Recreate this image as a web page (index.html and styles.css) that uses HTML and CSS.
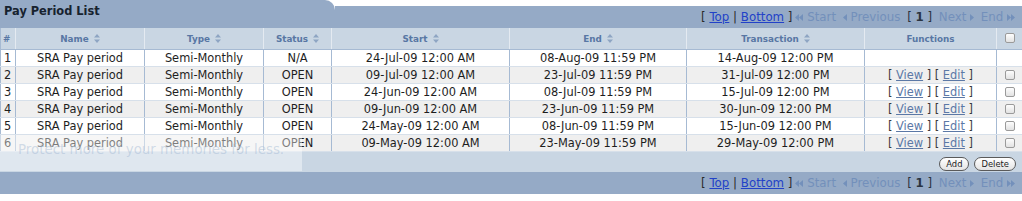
FILE: index.html
```html
<!DOCTYPE html>
<html lang="en">
<head>
    <meta charset="UTF-8">
    <title>Pay Period List</title>
    <link rel="stylesheet" href="styles.css">
</head>
<body>
    <div class="panel">
        <div class="panel-head">
            <div class="tab">Pay Period List</div>
            <div class="head-bar">
                <div class="pager">
                    <span class="br">[</span> <a href="#">Top</a> <span class="br">|</span> <a href="#">Bottom</a> <span class="br">]</span><span class="nav"><svg class="arr" width="8" height="7" viewBox="0 0 8 7"><path d="M4 0v7L0 3.5zM8 0v7L4 3.5z"/></svg> Start</span>
                    <span class="nav"><svg class="arr" width="4" height="7" viewBox="0 0 4 7"><path d="M4 0v7L0 3.5z"/></svg> Previous</span>
                    <span class="cur">[ <b>1</b> ]</span>
                    <span class="nav">Next <svg class="arr" width="4" height="7" viewBox="0 0 4 7"><path d="M0 0v7L4 3.5z"/></svg></span>
                    <span class="nav">End <svg class="arr" width="8" height="7" viewBox="0 0 8 7"><path d="M0 0v7L4 3.5zM4 0v7L8 3.5z"/></svg></span>
                </div>
            </div>
        </div>

        <table class="grid">
            <colgroup>
                <col style="width:15px">
                <col style="width:129px">
                <col style="width:119px">
                <col style="width:68px">
                <col style="width:178px">
                <col style="width:177px">
                <col style="width:178px">
                <col style="width:132px">
                <col>
            </colgroup>
            <thead>
                <tr>
                    <th class="num">#</th>
                    <th>Name <svg class="sort" width="6" height="9" viewBox="0 0 6 9"><path d="M3 0l3 3.5H0zM3 9L0 5.5h6z"/></svg></th>
                    <th>Type <svg class="sort" width="6" height="9" viewBox="0 0 6 9"><path d="M3 0l3 3.5H0zM3 9L0 5.5h6z"/></svg></th>
                    <th>Status <svg class="sort" width="6" height="9" viewBox="0 0 6 9"><path d="M3 0l3 3.5H0zM3 9L0 5.5h6z"/></svg></th>
                    <th>Start <svg class="sort" width="6" height="9" viewBox="0 0 6 9"><path d="M3 0l3 3.5H0zM3 9L0 5.5h6z"/></svg></th>
                    <th>End <svg class="sort" width="6" height="9" viewBox="0 0 6 9"><path d="M3 0l3 3.5H0zM3 9L0 5.5h6z"/></svg></th>
                    <th>Transaction <svg class="sort" width="6" height="9" viewBox="0 0 6 9"><path d="M3 0l3 3.5H0zM3 9L0 5.5h6z"/></svg></th>
                    <th>Functions</th>
                    <th><input type="checkbox" class="chk"></th>
                </tr>
            </thead>
            <tbody>
                <tr>
                    <td class="num">1</td>
                    <td>SRA Pay period</td>
                    <td>Semi-Monthly</td>
                    <td>N/A</td>
                    <td>24-Jul-09 12:00 AM</td>
                    <td>08-Aug-09 11:59 PM</td>
                    <td>14-Aug-09 12:00 PM</td>
                    <td></td>
                    <td></td>
                </tr>
                <tr class="alt">
                    <td class="num">2</td>
                    <td>SRA Pay period</td>
                    <td>Semi-Monthly</td>
                    <td>OPEN</td>
                    <td>09-Jul-09 12:00 AM</td>
                    <td>23-Jul-09 11:59 PM</td>
                    <td>31-Jul-09 12:00 PM</td>
                    <td class="fn">[ <a href="#">View</a> ] [ <a href="#">Edit</a> ]</td>
                    <td><input type="checkbox" class="chk"></td>
                </tr>
                <tr>
                    <td class="num">3</td>
                    <td>SRA Pay period</td>
                    <td>Semi-Monthly</td>
                    <td>OPEN</td>
                    <td>24-Jun-09 12:00 AM</td>
                    <td>08-Jul-09 11:59 PM</td>
                    <td>15-Jul-09 12:00 PM</td>
                    <td class="fn">[ <a href="#">View</a> ] [ <a href="#">Edit</a> ]</td>
                    <td><input type="checkbox" class="chk"></td>
                </tr>
                <tr class="alt">
                    <td class="num">4</td>
                    <td>SRA Pay period</td>
                    <td>Semi-Monthly</td>
                    <td>OPEN</td>
                    <td>09-Jun-09 12:00 AM</td>
                    <td>23-Jun-09 11:59 PM</td>
                    <td>30-Jun-09 12:00 PM</td>
                    <td class="fn">[ <a href="#">View</a> ] [ <a href="#">Edit</a> ]</td>
                    <td><input type="checkbox" class="chk"></td>
                </tr>
                <tr>
                    <td class="num">5</td>
                    <td>SRA Pay period</td>
                    <td>Semi-Monthly</td>
                    <td>OPEN</td>
                    <td>24-May-09 12:00 AM</td>
                    <td>08-Jun-09 11:59 PM</td>
                    <td>15-Jun-09 12:00 PM</td>
                    <td class="fn">[ <a href="#">View</a> ] [ <a href="#">Edit</a> ]</td>
                    <td><input type="checkbox" class="chk"></td>
                </tr>
                <tr class="alt">
                    <td class="num">6</td>
                    <td>SRA Pay period</td>
                    <td>Semi-Monthly</td>
                    <td>OPEN</td>
                    <td>09-May-09 12:00 AM</td>
                    <td>23-May-09 11:59 PM</td>
                    <td>29-May-09 12:00 PM</td>
                    <td class="fn">[ <a href="#">View</a> ] [ <a href="#">Edit</a> ]</td>
                    <td><input type="checkbox" class="chk"></td>
                </tr>
            </tbody>
        </table>

        <div class="actions">
            <button class="pill">Add</button>
            <button class="pill">Delete</button>
        </div>

        <div class="foot-bar">
            <div class="pager">
                <span class="br">[</span> <a href="#">Top</a> <span class="br">|</span> <a href="#">Bottom</a> <span class="br">]</span><span class="nav"><svg class="arr" width="8" height="7" viewBox="0 0 8 7"><path d="M4 0v7L0 3.5zM8 0v7L4 3.5z"/></svg> Start</span>
                <span class="nav"><svg class="arr" width="4" height="7" viewBox="0 0 4 7"><path d="M4 0v7L0 3.5z"/></svg> Previous</span>
                <span class="cur">[ <b>1</b> ]</span>
                <span class="nav">Next <svg class="arr" width="4" height="7" viewBox="0 0 4 7"><path d="M0 0v7L4 3.5z"/></svg></span>
                <span class="nav">End <svg class="arr" width="8" height="7" viewBox="0 0 8 7"><path d="M0 0v7L4 3.5zM4 0v7L8 3.5z"/></svg></span>
            </div>
        </div>

        <!-- photo host banner that sits over the lower left corner -->
        <div class="banner">Protect more of your memories for less.</div>
    </div>
</body>
</html>
```

FILE: styles.css
```css
body {
    margin: 0;
    background: #fff;
    font-family: "DejaVu Sans", Verdana, sans-serif;
    font-size: 11.4px;
    color: #1e1e1e;
}

.panel {
    position: relative;
    width: 1022px;
}

/* top bar */
.panel-head {
    display: flex;
    align-items: flex-end;
    height: 28px;
}

.tab {
    width: 335px;
    height: 28px;
    box-sizing: border-box;
    background: #95aac6;
    border-top-right-radius: 10px;
    padding: 4px 0 0 4px;
    font-weight: bold;
    color: #17222f;
}

.head-bar {
    flex: 1;
    height: 22px;
    background: #95aac6;
    display: flex;
    align-items: center;
    justify-content: flex-end;
    padding-right: 7px;
}

.pager {
    white-space: nowrap;
    color: #2c2c2c;
    font-size: 11.8px;
}

.pager a {
    color: #2241c8;
    text-decoration: underline;
}

.pager .nav {
    color: #7390bb;
    margin-left: 3px;
}

.pager .cur {
    margin-left: 3px;
    color: #2a3340;
}

.arr {
    fill: #7390bb;
    vertical-align: 0;
}

/* table */
.grid {
    width: 1022px;
    table-layout: fixed;
    border-collapse: collapse;
    border-left: 1px solid #a6bad3;
}

.grid th {
    height: 21px;
    padding: 0;
    background: #c9d6e3;
    color: #5877a4;
    font-size: 8.8px;
    font-weight: bold;
    text-align: center;
    border-left: 1px solid #e4eaf1;
    border-bottom: 1px solid #a6bad3;
    white-space: nowrap;
}

.grid th:first-child {
    border-left: none;
}

.sort {
    fill: #8ea5c3;
    vertical-align: -1px;
    margin-left: 2px;
}

.grid td {
    height: 16px;
    padding: 0;
    line-height: 16px;
    text-align: center;
    white-space: nowrap;
    border-left: 1px solid #a6bad3;
    border-bottom: 1px solid #d7e0ea;
    background: #fff;
}

.grid tr.alt td {
    background: #efefef;
}

.grid .num {
    text-align: left;
    padding-left: 3px;
}

.grid th.num {
    padding-left: 2px;
}

.fn {
    color: #3a3a3a;
}

.fn a {
    color: #5b78a6;
    text-decoration: underline;
}

.chk {
    -webkit-appearance: none;
    appearance: none;
    width: 10px;
    height: 10px;
    margin: 0;
    vertical-align: -1px;
    border: 1px solid #9a9a9a;
    border-radius: 2px;
    background: linear-gradient(#fdfdfd, #e2e2e2);
}

/* bottom */
.actions {
    display: flex;
    justify-content: flex-end;
    align-items: flex-end;
    gap: 5px;
    height: 20px;
    padding: 0 6px 1px 0;
    box-sizing: border-box;
    background: #c9d6e3;
}

.pill {
    height: 14px;
    padding: 0 6px;
    border: 1px solid #5a5a5a;
    border-radius: 8px;
    background: linear-gradient(#ffffff, #e4e4e4);
    font-family: "DejaVu Sans", Verdana, sans-serif;
    font-size: 8.4px;
    line-height: 12px;
    color: #1c1c1c;
}

.foot-bar {
    height: 22px;
    background: #95aac6;
    display: flex;
    align-items: center;
    justify-content: flex-end;
    padding-right: 7px;
}

.banner {
    position: absolute;
    left: 0;
    top: 135px;
    width: 302px;
    height: 36px;
    padding: 7px 0 0 18px;
    box-sizing: border-box;
    background: rgba(255, 255, 255, 0.42);
    font-size: 13.4px;
    color: rgba(160, 182, 210, 0.45);
    white-space: nowrap;
    overflow: hidden;
}
```
